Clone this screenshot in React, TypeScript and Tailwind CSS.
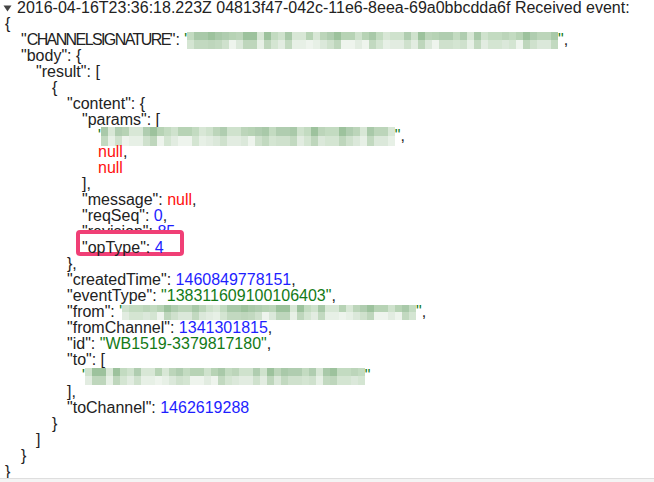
import React from 'react';

const top = ['bg-[#a9c9a9]', 'bg-[#b7d3b5]', 'bg-[#c3dbc1]', 'bg-[#9dc29d]', 'bg-[#cfe2cd]', 'bg-[#bcd5ba]', 'bg-[#d8e7d6]', 'bg-[#b0cdb0]'];
const bottom = ['bg-[#dbe8da]', 'bg-[#e7f0e6]', 'bg-[#cfe1cd]', 'bg-[#c2d9c0]', 'bg-[#eef4ed]', 'bg-[#d4e5d2]', 'bg-[#bed6bc]', 'bg-[#e2ece1]'];
const indent = ['pl-[5px]', 'pl-[21px]', 'pl-[36px]', 'pl-[52px]', 'pl-[67px]', 'pl-[82px]', 'pl-[98px]'];

// pixelated (redacted) value
const Blur = ({ cells, seed, h = 'h-[17px]' }: { cells: number; seed: number; h?: string }) => {
  const row = (pal: string[], off: number) => (
    <div className="flex flex-1">
      {Array.from({ length: cells }).map((_, i) => (
        <div key={i} className={'w-[7px] ' + pal[(i * 5 + ((i * i + seed) % 7) + off) % pal.length]} />
      ))}
    </div>
  );
  return (
    <span className={'inline-flex flex-col -ml-[3px] ' + h}>
      {row(top, seed)}
      {row(bottom, seed + 3)}
    </span>
  );
};

const S = ({ children }: { children: React.ReactNode }) => <span className="text-[#137a17]">{children}</span>;
const N = ({ children }: { children: React.ReactNode }) => <span className="text-[#1e1eff]">{children}</span>;
const Nul = () => <span className="text-[#ff0f0f]">null</span>;

const Line = ({ lv, children, rel }: { lv: number; children?: React.ReactNode; rel?: boolean }) => (
  <div className={'flex h-4 items-center whitespace-pre ' + indent[lv] + (rel ? ' relative' : '')}>{children}</div>
);

const App = () => {
  return (
    <div
      className="w-[654px] h-[482px] overflow-hidden bg-white text-[16px] leading-4 text-[#222] flex flex-col"
      style={{ fontFamily: '"Liberation Sans", Arial, sans-serif' }}
    >
      <div>
        <div className="flex h-4 items-center pl-[3px] whitespace-pre">
          <svg width="9" height="7" viewBox="0 0 9 7" className="mr-[5px]">
            <path d="M0.5 0.5 H8.5 L4.5 6.5 Z" fill="#444" />
          </svg>
          <span>2016-04-16T23:36:18.223Z 04813f47-042c-11e6-8eea-69a0bbcdda6f Received event:</span>
        </div>
        <Line lv={0}>{'{'}</Line>
        <Line lv={1}>
          "<span className="tracking-[-1.6px]">CHANNELSIGNATURE</span>":{' '}
          <S>"</S>
          <Blur cells={53} seed={1} />
          <S>"</S>,
        </Line>
        <Line lv={1}>"body": {'{'}</Line>
        <Line lv={2}>"result": [</Line>
        <Line lv={3}>{'{'}</Line>
        <Line lv={4}>"content": {'{'}</Line>
        <Line lv={5}>"params": [</Line>
        <Line lv={6}>
          <S>"</S>
          <Blur cells={42} seed={4} h="h-[19px]" />
          <S>"</S>,
        </Line>
        <Line lv={6}>
          <Nul />,
        </Line>
        <Line lv={6}>
          <Nul />
        </Line>
        <Line lv={5}>],</Line>
        <Line lv={5}>
          "message": <Nul />,
        </Line>
        <Line lv={5}>
          "reqSeq": <N>0</N>,
        </Line>
        <Line lv={5}>
          "revision": <N>85</N>,
        </Line>
        <Line lv={5} rel>
          <div className="absolute left-[76px] top-[-10px] w-[108px] h-[26px] rounded-[4px] border-[4px] border-[#f03f76] bg-white" />
          <span className="relative z-10">
            "opType": <N>4</N>
          </span>
        </Line>
        <Line lv={4}>{'},'}</Line>
        <Line lv={4}>
          "createdTime": <N>1460849778151</N>,
        </Line>
        <Line lv={4}>
          "eventType": <S>"138311609100106403"</S>,
        </Line>
        <Line lv={4}>
          "from": <S>"</S>
          <Blur cells={42} seed={2} h="h-[15px]" />
          <S>"</S>,
        </Line>
        <Line lv={4}>
          "fromChannel": <N>1341301815</N>,
        </Line>
        <Line lv={4}>
          "id": <S>"WB1519-3379817180"</S>,
        </Line>
        <Line lv={4}>"to": [</Line>
        <Line lv={5}>
          <S>"</S>
          <Blur cells={40} seed={6} />
          <S>"</S>
        </Line>
        <Line lv={4}>],</Line>
        <Line lv={4}>
          "toChannel": <N>1462619288</N>
        </Line>
        <Line lv={3}>{'}'}</Line>
        <Line lv={2}>]</Line>
        <Line lv={1}>{'}'}</Line>
        <Line lv={0}>{'}'}</Line>
      </div>
      <div className="mt-[-2px] flex-1 border-t border-[#dedede] bg-[#f4f4f4]" />
    </div>
  );
};

export default App;
